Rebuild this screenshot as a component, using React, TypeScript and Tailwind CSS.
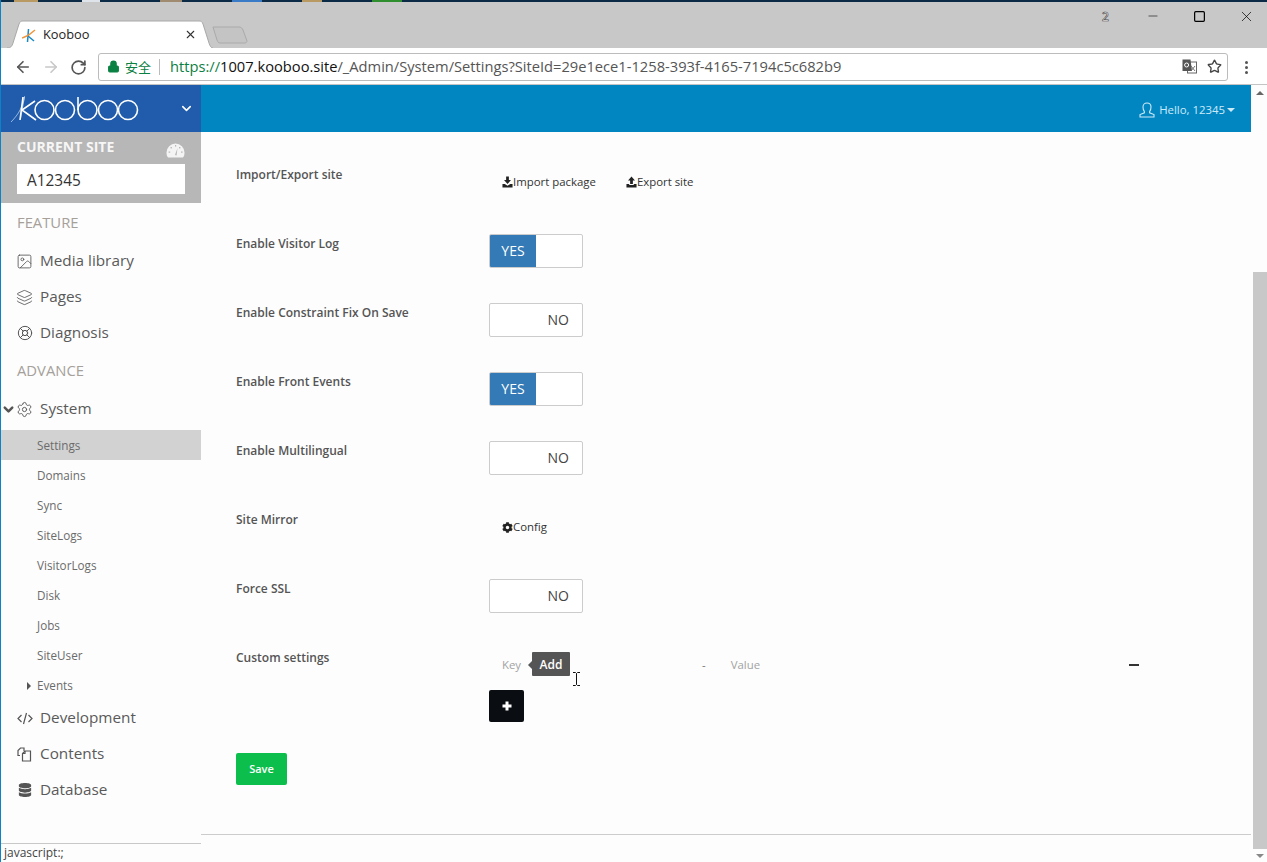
import React from "react";
import { Image, Layers, LifeBuoy, Settings, ChevronDown, Lock, Star, ArrowLeft, ArrowRight, RotateCw, X, Minus, Square } from "lucide-react";
import { FaCog, FaDatabase } from "react-icons/fa";

const Logo = () => (
  <svg width="128" height="28" viewBox="0 0 128 28" fill="none" stroke="#fff" strokeWidth="1.6" aria-label="kooboo">
    <path d="M0 26 C8 18 12 10 13.5 0.5 L9.5 23" strokeWidth="0.7" stroke="#cfe0f5" />
    <path d="M12 1 L9 24 M24 5 L11 14 L25 24" />
    <circle cx="33.5" cy="14" r="9.5" />
    <circle cx="54" cy="14" r="9.5" />
    <path d="M67 1 V14" />
    <circle cx="76.5" cy="14" r="9.5" />
    <circle cx="97" cy="14" r="9.5" />
    <circle cx="117" cy="14" r="9.5" />
  </svg>
);

const Gauge = () => (
  <svg width="19" height="15" viewBox="0 0 19 15" fill="#f4f4f4">
    <path d="M9.5 0.5 A9 9 0 0 0 0.5 9.5 C0.5 11.5 1 13.5 2 14.5 H17 C18 13.5 18.5 11.5 18.5 9.5 A9 9 0 0 0 9.5 0.5 Z" />
    <g fill="#b7b7b7">
      <rect x="9" y="2" width="1.2" height="1.6" />
      <rect x="4.5" y="4" width="1.4" height="1.4" />
      <rect x="13" y="4" width="1.4" height="1.4" />
      <rect x="2.6" y="8.5" width="1.6" height="1.2" />
      <rect x="15" y="8.5" width="1.6" height="1.2" />
      <path d="M9 12 L11.5 5 L10.6 12.5 Z" />
    </g>
  </svg>
);

const ImportIcon = () => (
  <svg width="11" height="12" viewBox="0 0 12 12" fill="#222" preserveAspectRatio="none">
    <path d="M4.5 0.5 H7.5 V4 H9.8 L6 8 L2.2 4 H4.5 Z" />
    <path d="M0.5 8 H3 L6 9.8 L9 8 H11.5 V11.5 H0.5 Z" />
  </svg>
);
const ExportIcon = () => (
  <svg width="11" height="12" viewBox="0 0 12 12" fill="#222" preserveAspectRatio="none">
    <path d="M6 0.5 L9.8 4.5 H7.5 V8 H4.5 V4.5 H2.2 Z" />
    <path d="M0.5 8 H3.5 V9 H8.5 V8 H11.5 V11.5 H0.5 Z" />
  </svg>
);
const ContentsIcon = () => (
  <svg width="15" height="15" viewBox="0 0 15 15" fill="none" stroke="#555" strokeWidth="1.2">
    <path d="M3 8.5 H1 V3.5 L3.5 1 H7 V4" />
    <path d="M5.5 14 V6.5 L8 4 H13.5 V14 Z" />
    <path d="M8 4 V6.5 H5.5" />
  </svg>
);
const CodeIcon = () => (
  <svg width="16" height="13" viewBox="0 0 16 13" fill="none" stroke="#555" strokeWidth="1.2">
    <path d="M4.5 3 L1 6.5 L4.5 10 M11.5 3 L15 6.5 L11.5 10 M9.5 1 L6.5 12" />
  </svg>
);
const UserIcon = () => (
  <svg width="16" height="16" viewBox="0 0 16 16" fill="none" stroke="#cdeaf7" strokeWidth="1.1">
    <path d="M5.4 9.6 C4.4 8.4 4 6.8 4 5 C4 2.4 5.6 1 8 1 C10.4 1 12 2.4 12 5 C12 6.8 11.6 8.4 10.6 9.6 V10.8 L15 12.6 V15 H1 V12.6 L5.4 10.8 Z" />
  </svg>
);
const Translate = () => (
  <svg width="15" height="15" viewBox="0 0 15 15">
    <rect x="5.5" y="3" width="9" height="11" fill="#fff" stroke="#666" />
    <path d="M0.5 0.5 H8.5 L10 12 H0.5 Z" fill="#555" />
    <circle cx="4.6" cy="6" r="2" fill="none" stroke="#fff" />
    <path d="M9 7 L13 12 M13 7 L9 12" stroke="#666" strokeWidth="0.9" />
  </svg>
);

const NavItem = ({ icon, label, chevron }: { icon: React.ReactNode; label: string; chevron?: boolean }) => (
  <div className="relative flex h-9 items-center pl-4 text-[15.3px] text-[#5a5a5a]">
    {chevron && <ChevronDown size={15} strokeWidth={4} className="absolute left-[0px] text-[#555]" />}
    <span className="flex w-[23px] items-center text-[#555]">{icon}</span>
    <span className="mb-[1px]">{label}</span>
  </div>
);

const SubItem = ({ label, active, arrow }: { label: string; active?: boolean; arrow?: boolean }) => (
  <div className={`relative flex h-[30px] items-center pl-9 pt-[2px] text-[11.7px] text-[#6b6b6b] ${active ? "bg-[#d2d2d2]" : ""}`}>
    {arrow && <span className="absolute left-[26px] h-0 w-0 border-y-[4px] border-l-[4px] border-y-transparent border-l-[#555]" />}
    {label}
  </div>
);

const SectionHead = ({ label }: { label: string }) => (
  <div className="flex h-10 items-center pb-[1px] pl-4 text-[14.8px] text-[#a5a09a]">{label}</div>
);

const Toggle = ({ on }: { on: boolean }) => (
  <div className="flex h-[34px] w-[94px] overflow-hidden rounded-[2px] border border-[#cccccc] bg-white text-sm">
    {on ? (
      <div className="flex h-full w-[46px] items-center justify-center bg-[#337ab7] text-white">YES</div>
    ) : (
      <div className="flex h-full w-full items-center justify-end pr-[13px] text-[#444]">NO</div>
    )}
  </div>
);

const Label = ({ text }: { text: string }) => (
  <div className="w-[253px] pt-[1px] text-xs font-semibold leading-[18px] text-[#555]">{text}</div>
);

const Row = ({ label, children }: { label: string; children: React.ReactNode }) => (
  <div className="flex h-[69px]">
    <Label text={label} />
    <div className="flex-1">{children}</div>
  </div>
);

export default function App() {
  return (
    <div className="relative flex h-[862px] w-[1267px] flex-col overflow-hidden border-l border-[#0a84c6] bg-[#fdfdfd] font-['Open_Sans',sans-serif]">
      {/* desktop strip */}
      <div className="flex h-[2px] bg-[#0b2a45]">
        <div className="ml-[13px] w-[24px] bg-[#b89a62]" />
        <div className="ml-[44px] w-[18px] bg-[#dfe4ea]" />
        <div className="ml-[60px] w-[22px] bg-[#a08a70]" />
        <div className="ml-[50px] w-[30px] bg-[#3a7bc8]" />
        <div className="ml-[40px] w-[20px] bg-[#b89a62]" />
        <div className="ml-[50px] w-[30px] bg-[#2f8f2f]" />
      </div>
      {/* tab strip */}
      <div className="relative flex h-[46px] items-end bg-[#c8c8c8]">
        <div className="relative ml-[6px] flex h-[28px] w-[206px] items-center pl-[15px]">
          <svg className="absolute left-0 top-0" width="206" height="28" viewBox="0 0 206 28" fill="#fff" stroke="#a8a8a8">
            <path d="M0 28 C4 28 5 26 6 23 L12 4 C13 1.5 14 1 16 1 H192 C194 1 195 1.5 196 4 L202 23 C203 26 204 28 206 28" />
          </svg>
          <svg className="relative mt-[2px]" width="14" height="15" viewBox="0 0 14 15" fill="none" strokeWidth="1.5">
            <path d="M6.5 1 L5.5 14" stroke="#1b8ac4" />
            <path d="M0 10 L6 7.5 L13 2" stroke="#f0953a" />
            <path d="M6 8 L12 13" stroke="#1b8ac4" />
          </svg>
          <span className="relative ml-[7px] pt-[2px] text-[12.8px] text-[#222]">Kooboo</span>
          <X size={13} strokeWidth={2} className="absolute left-[177px] text-[#333]" />
        </div>
        <svg className="mb-[4px] ml-[-1px]" width="36" height="18" viewBox="0 0 36 18" fill="#c4c4c4" stroke="#aaa">
          <path d="M1 1 H27 C29 1 30 2 31 4 L35 15 C35 16 34 17 33 17 H8 C6 17 6 16 5 14 Z" />
        </svg>
        <span className="absolute left-[1101px] top-[7px] text-xs font-semibold text-[#f2f2f2] [-webkit-text-stroke:0.6px_#444]">2</span>
        <Minus size={14} strokeWidth={1} className="absolute left-[1145px] top-[7px] text-black" />
        <Square size={13} strokeWidth={1.2} absoluteStrokeWidth className="absolute left-[1192px] top-[8px] text-black" />
        <X size={17} strokeWidth={1} className="absolute left-[1237px] top-[6px] text-black" />
      </div>
      {/* toolbar */}
      <div className="flex h-[37px] items-center border-b border-[#c4c4c4] bg-white pt-[2px]">
        <ArrowLeft size={18} strokeWidth={2.2} className="ml-[13px] text-[#555]" />
        <ArrowRight size={18} strokeWidth={2.2} className="ml-[10px] text-[#c8c8c8]" />
        <RotateCw size={17} strokeWidth={2.4} className="ml-[10px] text-[#555]" />
        <div className="ml-[11px] flex h-[28px] w-[1130px] items-center rounded-[3px] border border-[#bcbcbc] pb-[1px] pl-[8px]">
          <Lock size={13} fill="#0b8043" strokeWidth={2} className="text-[#0b8043]" />
          <span className="ml-[5px] font-['Noto_Sans_CJK_SC',sans-serif] text-[13px] text-[#0b8043]">安全</span>
          <span className="ml-[8px] h-[16px] w-px bg-[#bbb]" />
          <span className="ml-[10px] whitespace-nowrap text-[14.68px] text-[#555]">
            <span className="text-[#0b8043]">https://</span>
            <span className="text-[#111]">1007.kooboo.site</span>/_Admin/System/Settings?SiteId=29e1ece1-1258-393f-4165-7194c5c682b9
          </span>
          <span className="ml-auto mr-[5px] flex items-center gap-[10px]">
            <Translate />
            <Star size={15} strokeWidth={2.2} className="text-[#444]" />
          </span>
        </div>
        <div className="ml-[17px] flex flex-col gap-[2px]">
          <span className="h-[3px] w-[3px] rounded-full bg-[#555]" />
          <span className="h-[3px] w-[3px] rounded-full bg-[#555]" />
          <span className="h-[3px] w-[3px] rounded-full bg-[#555]" />
        </div>
      </div>
      {/* app */}
      <div className="flex min-h-0 flex-1">
        <aside className="flex w-[200px] flex-col">
          <div className="flex h-[47px] items-center bg-[#205cab] pl-[10px] pt-[3px]">
            <Logo />
            <ChevronDown size={15} strokeWidth={2.5} className="mb-[3px] ml-[40px] text-white" />
          </div>
          <div className="h-[71px] bg-[#b7b7b7] px-4">
            <div className="flex h-[32px] items-center justify-between">
              <span className="mb-[2px] text-sm font-bold leading-[28px] text-[#f6f6f6]">CURRENT SITE</span>
              <span className="mt-[5px]"><Gauge /></span>
            </div>
            <div className="flex h-[30px] items-center bg-white pl-[10px] pt-[3px] text-[15.4px] text-[#333]">A12345</div>
          </div>
          <SectionHead label="FEATURE" />
          <NavItem icon={<Image size={17} strokeWidth={1.2} className="ml-[-1px]" />} label="Media library" />
          <NavItem icon={<Layers size={17} strokeWidth={1.2} className="ml-[-1px]" />} label="Pages" />
          <NavItem icon={<LifeBuoy size={16} strokeWidth={1.5} className="ml-[-0.5px]" />} label="Diagnosis" />
          <SectionHead label="ADVANCE" />
          <NavItem chevron icon={<Settings size={17} strokeWidth={1.3} className="ml-[-1px]" />} label="System" />
          <div className="pt-[3px]">
            <SubItem active label="Settings" />
            <SubItem label="Domains" />
            <SubItem label="Sync" />
            <SubItem label="SiteLogs" />
            <SubItem label="VisitorLogs" />
            <SubItem label="Disk" />
            <SubItem label="Jobs" />
            <SubItem label="SiteUser" />
            <SubItem arrow label="Events" />
          </div>
          <NavItem icon={<CodeIcon />} label="Development" />
          <NavItem icon={<ContentsIcon />} label="Contents" />
          <NavItem icon={<FaDatabase size={14} className="ml-[1px]" />} label="Database" />
          <div className="mt-auto flex h-[19px] items-center border-t border-[#c8c8c8] pl-[3px] text-xs text-[#444]">javascript:;</div>
        </aside>
        <div className="flex w-[1050px] flex-col">
          <header className="flex h-[47px] items-center justify-end bg-[#0286c2] pr-[16px] pt-[2px] text-[11.4px] text-[#cdeaf7]">
            <UserIcon />
            <span className="ml-[4px]">Hello, 12345</span>
            <span className="ml-[2px] h-0 w-0 border-x-[4px] border-t-[4px] border-x-transparent border-t-[#cdeaf7]" />
          </header>
          <main className="flex-1 pl-[35px] pt-[33px]">
            <Row label="Import/Export site">
              <div className="flex h-[34px] items-center pl-[13px] text-[11.4px] text-[#333]">
                <ImportIcon /><span>Import package</span>
                <span className="ml-[30px]"><ExportIcon /></span><span>Export site</span>
              </div>
            </Row>
            <Row label="Enable Visitor Log"><Toggle on /></Row>
            <Row label="Enable Constraint Fix On Save"><Toggle on={false} /></Row>
            <Row label="Enable Front Events"><Toggle on /></Row>
            <Row label="Enable Multilingual"><Toggle on={false} /></Row>
            <Row label="Site Mirror">
              <div className="flex h-[34px] items-center pl-[13px] text-[11.4px] text-[#333]">
                <FaCog size={11} className="text-[#222]" /><span>Config</span>
              </div>
            </Row>
            <Row label="Force SSL"><Toggle on={false} /></Row>
            <div className="flex h-[105px]">
              <Label text="Custom settings" />
              <div className="relative flex-1">
                <div className="relative flex h-[34px] items-center pl-[13px] text-[11.4px] text-[#a3a3a3]">
                  <span>Key</span>
                  <span className="ml-[181px] text-[#777]">-</span>
                  <span className="ml-[25px]">Value</span>
                  <span className="absolute left-[640px] h-[2px] w-[10px] bg-[#333]" />
                  <div className="absolute left-[43px] top-[4px] flex h-[24px] w-[38px] items-center justify-center rounded-[1px] bg-[#555] pt-[1px] text-xs font-semibold text-white">
                    <span className="absolute left-[-4px] h-0 w-0 border-y-[4px] border-r-[4px] border-y-transparent border-r-[#555]" />
                    Add
                  </div>
                  <svg className="absolute left-[84px] top-[24px]" width="7" height="14" viewBox="0 0 7 14" fill="none" stroke="#111">
                    <path d="M0 0.5 H2.5 L3.5 1.5 L4.5 0.5 H7 M3.5 1.5 V12.5 M0 13.5 H2.5 L3.5 12.5 L4.5 13.5 H7" />
                  </svg>
                </div>
                <div className="mt-[8px] flex h-[32px] w-[35px] items-center justify-center rounded-[2px] bg-[#0a0d12]">
                  <svg width="10" height="10" viewBox="0 0 10 10" fill="#fff"><path d="M3.5 0.5 H6.5 V3.5 H9.5 V6.5 H6.5 V9.5 H3.5 V6.5 H0.5 V3.5 H3.5 Z" /></svg>
                </div>
              </div>
            </div>
            <div className="flex h-[32px] w-[51px] items-center justify-center rounded-[2px] bg-[#0cbf4c] text-[11px] font-semibold text-white">Save</div>
          </main>
          <div className="mb-[27px] h-px bg-[#cccccc]" />
        </div>
        <div className="ml-[2px] flex w-[14px] flex-col">
          <div className="flex h-[16px] items-center justify-center">
            <span className="h-0 w-0 border-x-[4px] border-b-[4px] border-x-transparent border-b-[#666]" />
          </div>
          <div className="mt-[171px] h-[577px] bg-[#c8c8c8]" />
          <div className="flex flex-1 items-center justify-center">
            <span className="h-0 w-0 border-x-[4px] border-t-[4px] border-x-transparent border-t-[#888]" />
          </div>
        </div>
      </div>
    </div>
  );
}
